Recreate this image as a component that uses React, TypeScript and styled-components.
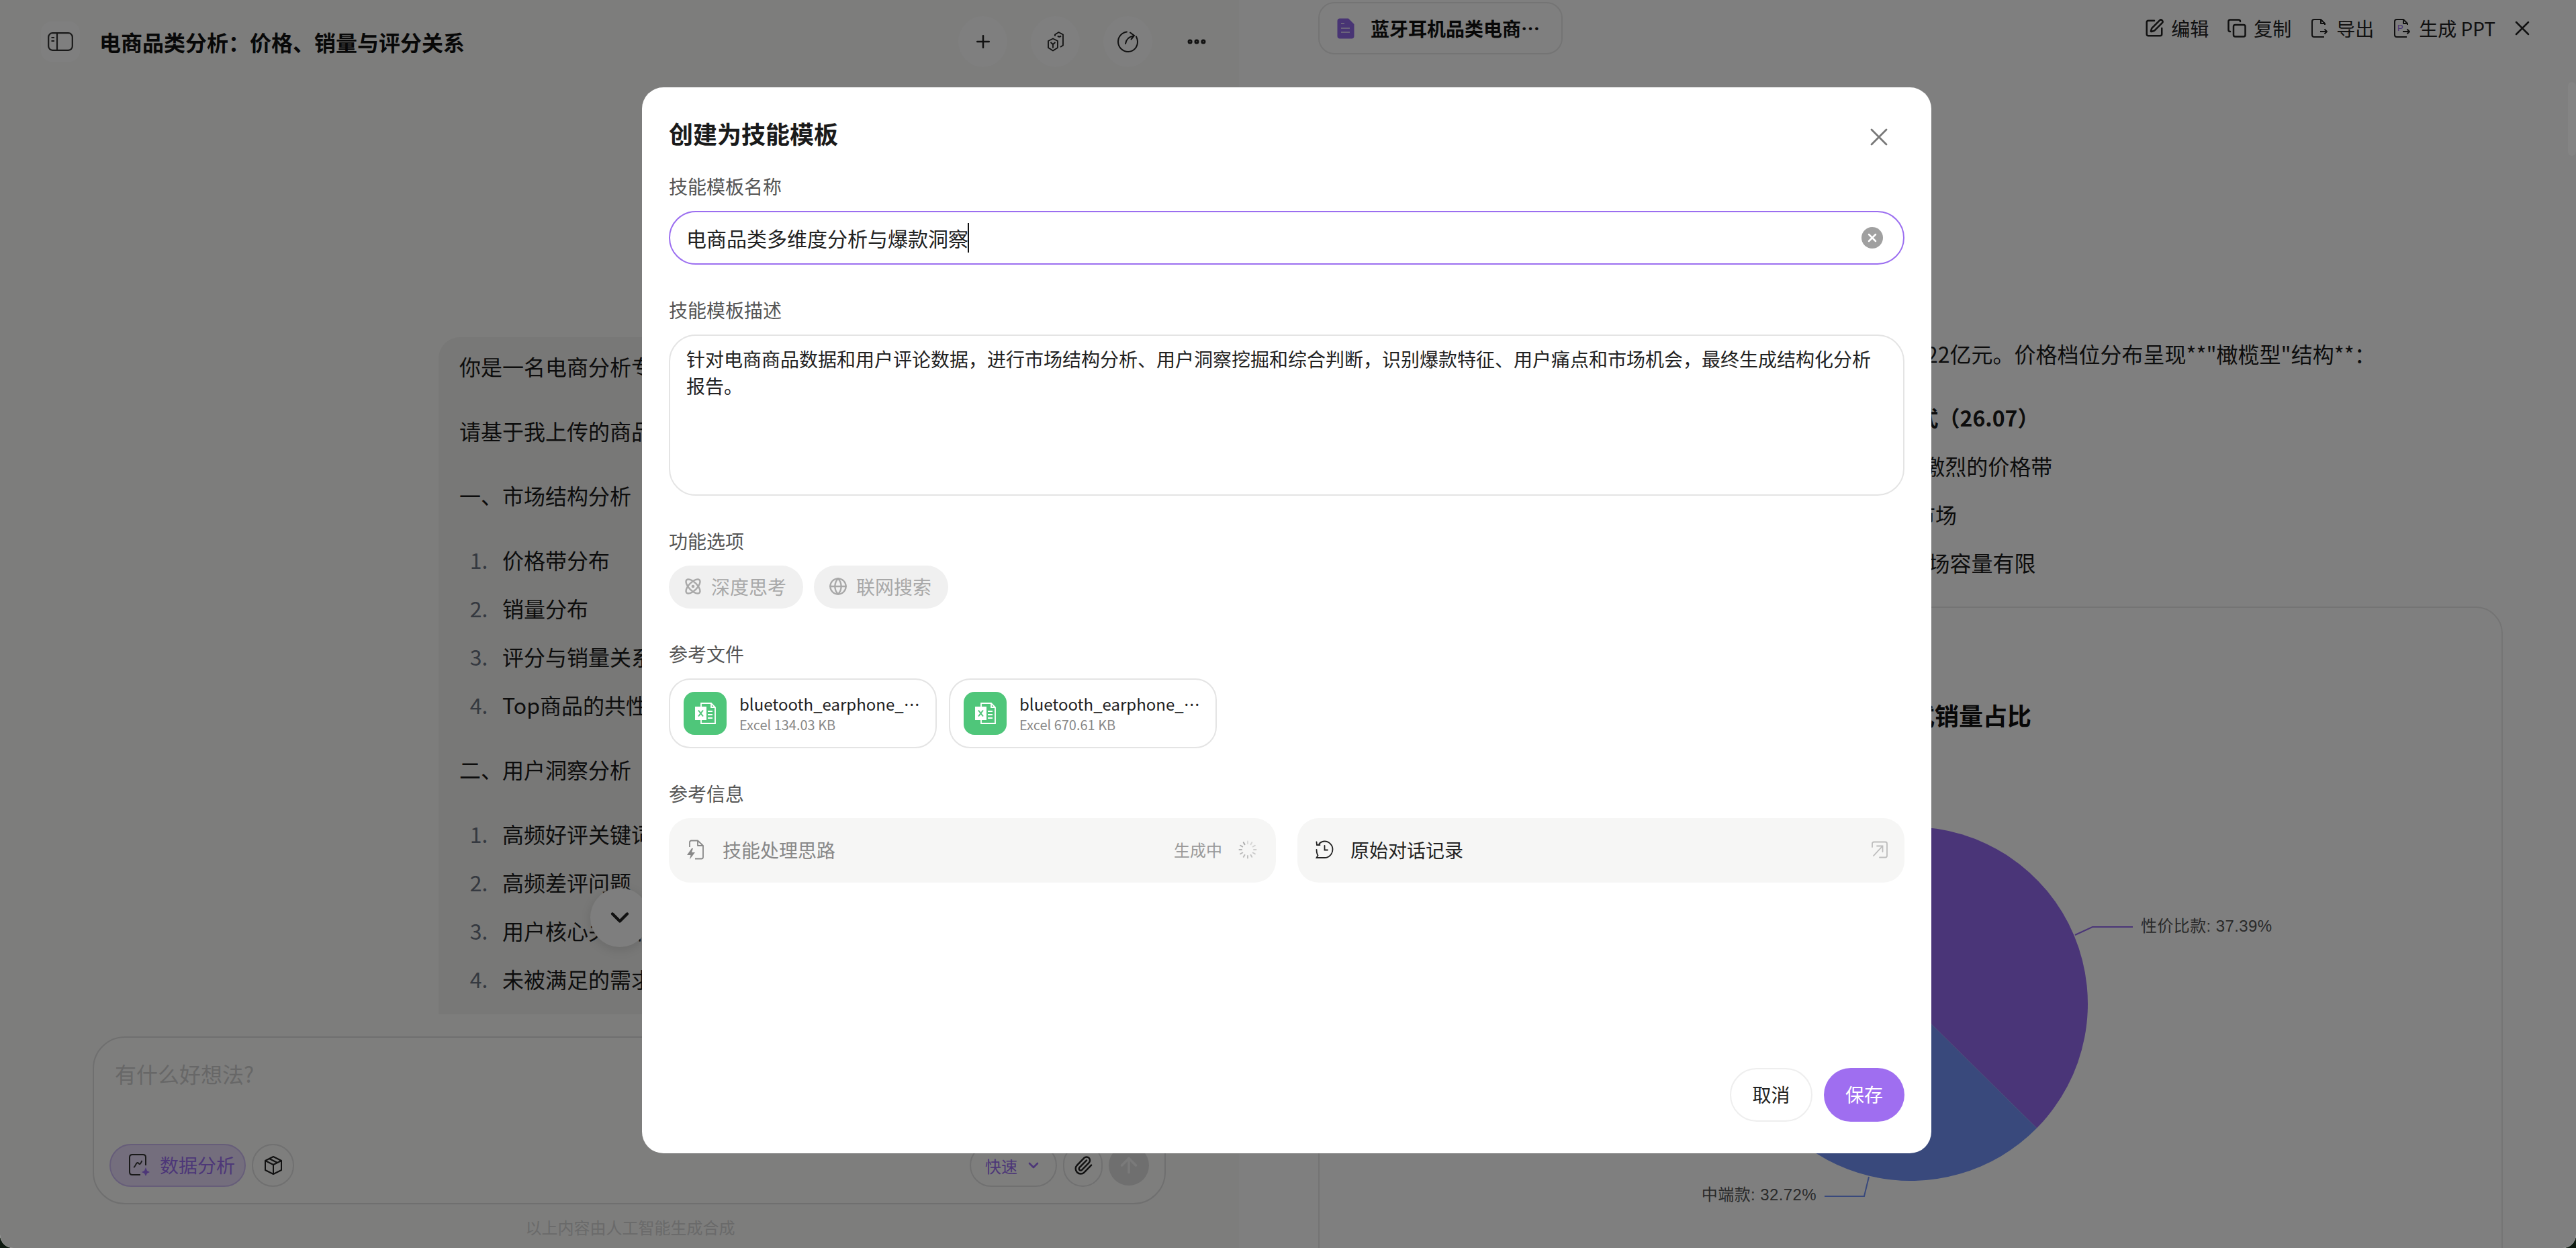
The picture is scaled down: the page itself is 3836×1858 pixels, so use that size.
import React from 'react';
import styled, { createGlobalStyle } from 'styled-components';
import { ArrowUp, Atom, ChevronDown, Copy, Ellipsis, Globe, Paperclip, Plus, SquarePen, X } from 'lucide-react';

const GlobalStyle = createGlobalStyle`
  html, body {
    margin: 0;
    width: 3836px;
    height: 1858px;
    overflow: hidden;
    background: #0e1a10;
  }
  * {
    box-sizing: border-box;
  }
  body {
    font-family: "Noto Sans CJK SC", "Noto Sans", sans-serif;
    color: #222;
  }
`;

const Page = styled.div`
  position: relative;
  display: flex;
  width: 3836px;
  height: 1858px;
  overflow: hidden;
  border-radius: 0 0 20px 20px;
  background: #fff;
`;

/* left: conversation */
const ChatPanel = styled.section`
  position: relative;
  display: flex;
  flex-direction: column;
  width: 1845px;
  flex: none;
  background: #fafaf8;
`;

const ChatHeader = styled.header`
  display: flex;
  align-items: center;
  height: 124px;
  padding: 0 33px 0 61px;
`;

const SidebarButton = styled.button`
  display: flex;
  align-items: center;
  justify-content: center;
  width: 58px;
  height: 60px;
  margin-right: 29px;
  padding: 0;
  border: 0;
  border-radius: 16px;
  background: #fff;
  color: #333;
`;

const ChatTitle = styled.h1`
  flex: 1;
  margin: 0;
  font-size: 32px;
  line-height: 48px;
  font-weight: 700;
  color: #111;
`;

const HeaderTools = styled.div`
  display: flex;
  gap: 35px;
`;

const RoundTool = styled.button<{ $plain?: boolean }>`
  display: flex;
  align-items: center;
  justify-content: center;
  width: ${({ $plain }) => ($plain ? 61 : 73)}px;
  height: 76px;
  padding: 0;
  border: 0;
  border-radius: 50%;
  background: ${({ $plain }) => ($plain ? 'transparent' : '#fefefe')};
  color: #222;
`;

const Messages = styled.div`
  flex: none;
  padding: 378px 109px 0 653px;
`;

const Bubble = styled.div`
  height: 1008px;
  padding: 15px 32px 0 31px;
  border-radius: 32px 0 0 0;
  background: #f0f0ee;
  font-size: 32px;
  line-height: 56px;
  color: #1a1a1a;
  white-space: nowrap;
  overflow: hidden;
`;

const BubbleText = styled.p`
  margin: 0 0 40px;
`;

const BubbleList = styled.ol`
  margin: 0 0 40px;
  padding-left: 64px;

  li {
    margin-bottom: 16px;
  }
  li:last-child {
    margin-bottom: 0;
  }
  li::marker {
    content: counter(list-item) ".   ";
    color: #6b7280;
  }
`;

const ScrollDown = styled.button`
  position: absolute;
  top: 1322px;
  left: 879px;
  display: flex;
  align-items: center;
  justify-content: center;
  width: 88px;
  height: 88px;
  padding: 0;
  border: 0;
  border-radius: 50%;
  background: #fdfdfc;
  box-shadow: 0 4px 16px rgba(0, 0, 0, 0.12);
  color: #222;
`;

const Composer = styled.div`
  display: flex;
  flex-direction: column;
  justify-content: space-between;
  height: 250px;
  margin: 33px 109px 0 138px;
  padding: 29px 23px 24px;
  border: 2px solid #dedede;
  border-radius: 48px;
  background: #fcfcfb;
`;

const Placeholder = styled.div`
  padding-left: 8px;
  font-size: 32px;
  line-height: 48px;
  color: #cfcfcf;
`;

const ComposerRow = styled.div`
  display: flex;
  align-items: center;
  justify-content: space-between;
`;

const ComposerGroup = styled.div`
  display: flex;
  align-items: center;
  gap: 9px;
`;

const ModeChip = styled.div`
  display: flex;
  align-items: center;
  gap: 15px;
  width: 203px;
  height: 64px;
  padding: 0 0 2px 26px;
  border: 2px solid #cdbbf2;
  border-radius: 32px;
  background: #e8dcfb;
  font-size: 28px;
  color: #9a6ef0;
`;

const GhostCircle = styled.div<{ $w: number }>`
  display: flex;
  align-items: center;
  justify-content: center;
  width: ${({ $w }) => $w}px;
  height: 64px;
  border: 2px solid #e0e0e0;
  border-radius: 32px;
  color: #222;
`;

const SpeedChip = styled.div`
  display: flex;
  align-items: center;
  justify-content: center;
  gap: 12px;
  width: 130px;
  height: 64px;
  border: 2px solid #e0e0e0;
  border-radius: 32px;
  font-size: 24px;
  color: #9a6ef0;
`;

const SendCircle = styled.div`
  display: flex;
  align-items: center;
  justify-content: center;
  width: 60px;
  height: 60px;
  border-radius: 50%;
  background: #dedede;
  color: #f4f4f4;
`;

const Disclaimer = styled.div`
  margin: 16px 0 0 32px;
  font-size: 24px;
  line-height: 36px;
  text-align: center;
  color: #d4d4d4;
`;

/* right: document */
const DocPanel = styled.section`
  flex: 1;
  min-width: 0;
  background: #fff;
`;

const DocHeader = styled.header`
  display: flex;
  align-items: center;
  justify-content: space-between;
  height: 84px;
  padding: 3px 62px 3px 118px;
`;

const FileTab = styled.div`
  display: flex;
  align-items: center;
  gap: 24px;
  width: 364px;
  height: 78px;
  padding: 0 24px 0 26px;
  border: 2px solid #e8e8e8;
  border-radius: 24px;
`;

const FileTabName = styled.span`
  width: 256px;
  font-size: 28px;
  font-weight: 700;
  color: #111;
  white-space: nowrap;
  overflow: hidden;
  text-overflow: ellipsis;
`;

const DocActions = styled.div`
  display: flex;
  align-items: center;
  gap: 27px;
`;

const DocAction = styled.div`
  display: flex;
  align-items: center;
  gap: 10px;
  font-size: 28px;
  color: #222;
`;

const DocClose = styled.span`
  display: flex;
  margin-left: -5px;
  color: #222;
`;

const DocBody = styled.div`
  padding: 414px 0 0 118px;
  font-size: 32px;
  line-height: 56px;
  color: #1a1a1a;
  white-space: nowrap;
`;

const DocText = styled.p`
  margin: 0 0 39px;
`;

const DocList = styled.ul`
  margin: 0 0 38px;
  padding-left: 48px;

  li {
    margin-bottom: 16px;
  }
  li:last-child {
    margin-bottom: 0;
  }
`;

const ChartCard = styled.div`
  width: 1764px;
  height: 1100px;
  border: 2px solid #e8e8e8;
  border-radius: 40px;
`;

const ChartSvg = styled.svg`
  display: block;
  font-family: "Liberation Sans", "Noto Sans CJK SC", sans-serif;
`;

/* dialog */
const Overlay = styled.div`
  position: absolute;
  inset: 0;
  display: flex;
  align-items: flex-start;
  padding: 130px 0 0 956px;
  background: rgba(0, 0, 0, 0.5);
`;

const ScrollThumb = styled.div`
  position: absolute;
  top: 122px;
  right: 0;
  width: 12px;
  height: 110px;
  border-radius: 6px;
  background: rgba(255, 255, 255, 0.04);
`;

const Dialog = styled.div`
  display: flex;
  flex-direction: column;
  width: 1920px;
  height: 1587px;
  padding: 45px 40px 47px;
  border-radius: 32px;
  background: #fff;
`;

const DialogHeader = styled.div`
  display: flex;
  align-items: center;
  justify-content: space-between;
  height: 50px;
`;

const DialogTitle = styled.h2`
  margin: 0 0 4px;
  font-size: 36px;
  line-height: 50px;
  font-weight: 700;
  color: #1a1a1a;
`;

const CloseButton = styled.button`
  display: flex;
  margin: 8px 16px 0 0;
  padding: 0;
  border: 0;
  background: none;
  color: #777;
`;

const Field = styled.div<{ $gap?: number }>`
  margin-top: ${({ $gap }) => $gap ?? 49}px;
`;

const FieldLabel = styled.div`
  margin: -2px 0 17px;
  font-size: 28px;
  line-height: 40px;
  color: #555;
`;

const NameInput = styled.div`
  display: flex;
  align-items: center;
  height: 80px;
  padding: 0 30px 0 24px;
  border: 2px solid #9b6ef0;
  border-radius: 40px;
  font-size: 30px;
  color: #222;
`;

const Caret = styled.span`
  width: 2px;
  height: 44px;
  margin-left: -1px;
  background: #111;
`;

const ClearIcon = styled.span`
  display: flex;
  align-items: center;
  justify-content: center;
  width: 32px;
  height: 32px;
  margin-left: auto;
  border-radius: 50%;
  background: #a0a0a0;
  color: #fff;
`;

const DescBox = styled.div`
  height: 240px;
  padding: 14px 30px 18px 24px;
  border: 2px solid #e4e4e4;
  border-radius: 40px;
  font-size: 28px;
  line-height: 40px;
  color: #222;
`;

const ChipRow = styled.div`
  display: flex;
  gap: 16px;
`;

const OptionChip = styled.div`
  display: flex;
  align-items: center;
  gap: 13px;
  width: 200px;
  height: 64px;
  padding: 0 0 3px 22px;
  border-radius: 32px;
  background: #f0f0f0;
  font-size: 28px;
  color: #a8a8a8;
`;

const FileRow = styled.div`
  display: flex;
  gap: 18px;
`;

const FileCard = styled.div`
  display: flex;
  align-items: center;
  gap: 19px;
  width: 399px;
  height: 104px;
  padding: 0 16px 0 20px;
  border: 2px solid #e4e4e4;
  border-radius: 32px;
`;

const FileBadge = styled.div`
  display: flex;
  flex: none;
  width: 64px;
  height: 64px;
  border-radius: 16px;
  background: #4fc67a;
`;

const FileInfo = styled.div`
  flex: 1;
  min-width: 0;
`;

const FileName = styled.div`
  font-size: 24px;
  line-height: 34px;
  color: #222;
  white-space: nowrap;
  overflow: hidden;
  text-overflow: ellipsis;
`;

const FileMeta = styled.div`
  font-size: 20px;
  line-height: 28px;
  color: #888;
`;

const RefRow = styled.div`
  display: grid;
  grid-template-columns: 1fr 1fr;
  gap: 32px;
`;

const RefCard = styled.div<{ $muted?: boolean }>`
  display: flex;
  align-items: center;
  gap: 25px;
  height: 96px;
  padding: 0 26px 3px;
  border-radius: 32px;
  background: #f6f6f5;
  font-size: 28px;
  color: ${({ $muted }) => ($muted ? '#888' : '#222')};
`;

const RefStatus = styled.div`
  display: flex;
  align-items: center;
  gap: 24px;
  margin: 0 2px 0 auto;
  font-size: 24px;
  color: #999;
`;

const RefOpen = styled.span`
  display: flex;
  margin: 0 -2px 0 auto;
  color: #bdbdbd;
`;

const DialogFooter = styled.div`
  display: flex;
  justify-content: flex-end;
  gap: 17px;
  margin-top: auto;
`;

const FooterButton = styled.button<{ $primary?: boolean }>`
  width: ${({ $primary }) => ($primary ? 120 : 123)}px;
  height: 80px;
  padding: 0 0 3px;
  border: ${({ $primary }) => ($primary ? '0' : '2px solid #eeeeee')};
  border-radius: 40px;
  background: ${({ $primary }) => ($primary ? '#9f6ef0' : '#fff')};
  font-family: inherit;
  font-size: 28px;
  color: ${({ $primary }) => ($primary ? '#fff' : '#222')};
`;

const SidebarIcon = () => (
  <svg width="38" height="28" viewBox="0 0 38 28" fill="none" stroke="currentColor" strokeWidth="2.2">
    <rect x="1.2" y="1.2" width="35.6" height="25.6" rx="6" />
    <path d="M14 1.5V26.5M5.5 8H10M5.5 13H10" />
  </svg>
);

const CubesIcon = () => (
  <svg width="32" height="32" viewBox="0 0 32 32" fill="none" stroke="currentColor" strokeWidth="1.8" strokeLinejoin="round">
    <path d="M15 8V5.5L20.5 2L27 5.5V21.5L23 24" />
    <path d="M19 7.5C20.5 9 22.5 9 24 7.5" />
    <path d="M5 15L12 11.5L19 15V25L12 29.5L5 25V15Z" />
    <path d="M8.5 17L12 20L15.5 17M12 20V25.5" />
  </svg>
);

const ShareRingIcon = () => (
  <svg width="34" height="34" viewBox="0 0 34 34" fill="none" stroke="currentColor" strokeWidth="2" strokeLinecap="round">
    <path d="M15 2.5C7.5 3.5 2 9.5 2 17C2 25 8.5 32 17 32C25 32 31 25.5 31 17C31 14 30 11.5 29 9.5" />
    <path d="M13 20C14 14 18.5 9.5 25 8.5M20 3.5L26 8L21.5 13.5" />
  </svg>
);

const DocGlyph = () => (
  <svg width="26" height="31" viewBox="0 0 26 31" fill="none">
    <path d="M4 0.5H17L25.5 9V27C25.5 29 24 30.5 22 30.5H4C2 30.5 0.5 29 0.5 27V4C0.5 2 2 0.5 4 0.5Z" fill="#9068e8" />
    <path d="M6 8H11M6 15H19M6 21H19" stroke="#d6c8f6" strokeWidth="2" />
  </svg>
);

const ExportIcon = ({ mark }: { mark?: boolean }) => (
  <svg width="30" height="30" viewBox="0 0 30 30" fill="none" stroke="currentColor" strokeWidth="2" strokeLinejoin="round">
    <path d="M23 10V8L17 2H7C5 2 4 3 4 5V25C4 27 5 28 7 28H22" />
    <path d="M17 2V8H23" />
    <path d="M16 20H26M22.5 16.5L26 20L22.5 23.5" />
    {mark && (
      <text x="8" y="19" fontSize="13" fontFamily="Liberation Sans, sans-serif" fill="#9068e8" stroke="none">
        P
      </text>
    )}
  </svg>
);

const FileSheetIcon = () => (
  <svg width="64" height="64" viewBox="0 0 64 64" fill="none">
    <path d="M26 17H41L47 23V47H26V17Z" stroke="#fff" strokeWidth="1.8" />
    <path d="M41 17V23H47M36 29H43M36 34H43M36 39H43" stroke="#fff" strokeWidth="1.8" />
    <rect x="17" y="22" width="17" height="20" fill="#fff" />
    <path d="M22 27.5L29 36.5M29 27.5L22 36.5" stroke="#4fc67a" strokeWidth="2" />
  </svg>
);

const BoltFileIcon = () => (
  <svg width="29" height="30" viewBox="0 0 29 30" fill="none" stroke="currentColor" strokeWidth="1.8" strokeLinejoin="round">
    <path d="M5 11V4C5 2.5 6 1.5 7.5 1.5H17L25 9V26C25 27.5 24 28.5 22.5 28.5H13" />
    <path d="M17 1.5V9H25" />
    <path d="M8 13L1 23H6.5L5 29.5L13 19H8L10 13H8Z" fill="currentColor" stroke="none" />
  </svg>
);

const HistoryChatIcon = () => (
  <svg width="28" height="28" viewBox="0 0 28 28" fill="none" stroke="currentColor" strokeWidth="1.8" strokeLinecap="round">
    <path d="M6.5 5C9 2.5 11.5 1.5 14.5 1.5C21 1.5 26.5 7 26.5 13.5C26.5 20.5 21 26 14.5 26H2.5L4.5 22.5C3 20 2.5 17 2.5 14" />
    <path d="M2.5 2.5L3 7H7.5" />
    <path d="M14.5 8V14.5H19" />
  </svg>
);

const OpenSquareIcon = () => (
  <svg width="26" height="26" viewBox="0 0 26 26" fill="none" stroke="currentColor" strokeWidth="1.8" strokeLinecap="round">
    <path d="M2 9V4C2 2.5 3 1.5 4.5 1.5H21.5C23 1.5 24 2.5 24 4V22C24 23.5 23 24.5 21.5 24.5H13" />
    <path d="M4 22L17 8M9 7.5H17.5V16" />
  </svg>
);

const Spinner = () => (
  <svg width="28" height="28" viewBox="0 0 28 28" stroke="#a8a8a8" strokeWidth="2" strokeLinecap="round">
    {Array.from({ length: 12 }).map((_, i) => (
      <line key={i} x1="14" y1="1.5" x2="14" y2="5" transform={`rotate(${i * 30} 14 14)`} opacity={0.35 + i * 0.055} />
    ))}
  </svg>
);

const TrendSparkIcon = () => (
  <svg width="32" height="34" viewBox="0 0 32 34" fill="none">
    <path
      d="M26 18V6C26 3.5 24.5 2 22 2H6C3.5 2 2 3.5 2 6V28C2 30.5 3.5 32 6 32H18"
      stroke="#333"
      strokeWidth="2"
    />
    <path d="M8 21C11 20 11 14 14 14C16 14 15.5 17 17.5 16C19 15 19.5 12.5 20.5 11" stroke="#333" strokeWidth="1.8" />
    <path d="M26 21L28 26L32 28L28 30L26 34L24 30L20 28L24 26L26 21Z" fill="#9a6ef0" />
  </svg>
);

const BoxIcon = () => (
  <svg width="30" height="30" viewBox="0 0 30 30" fill="none" stroke="currentColor" strokeWidth="2" strokeLinejoin="round">
    <path d="M15 2L27 8V22L15 28L3 22V8L15 2Z" />
    <path d="M3 8L15 14L27 8M15 14V28M9 5L21 11" />
  </svg>
);

// pie from a data list, slices run clockwise from 12 o'clock
const PIE_CX = 880.5;
const PIE_CY = 589.5;
const PIE_R = 263.5;
const slices = [
  { share: 37.39, color: '#946af0' },
  { share: 32.72, color: '#7292f8' },
  { share: 29.89, color: '#8fd0f0' },
];

const piePaths = () => {
  let from = 0;
  return slices.map((s) => {
    const to = from + (s.share / 100) * Math.PI * 2;
    const sx = PIE_CX + PIE_R * Math.sin(from);
    const sy = PIE_CY - PIE_R * Math.cos(from);
    const ex = PIE_CX + PIE_R * Math.sin(to);
    const ey = PIE_CY - PIE_R * Math.cos(to);
    from = to;
    return { d: `M${PIE_CX} ${PIE_CY}L${sx} ${sy}A${PIE_R} ${PIE_R} 0 0 1 ${ex} ${ey}Z`, color: s.color };
  });
};

const PriceChart = () => (
  <ChartSvg width="1760" height="1096" viewBox="0 0 1760 1096">
    <text x="880" y="165" textAnchor="middle" dominantBaseline="middle" fontSize="36" fontWeight="700" fill="#111">
      不同档位款式销量占比
    </text>
    {piePaths().map((p) => (
      <path key={p.color} d={p.d} fill={p.color} />
    ))}
    <path d="M1125 487L1151 475H1211" fill="none" stroke="#946af0" strokeWidth="2" />
    <text x="1223" y="476" dominantBaseline="middle" fontSize="24" letterSpacing="0.4" fill="#555">
      性价比款: 37.39%
    </text>
    <path d="M818 847L811 876H752" fill="none" stroke="#7292f8" strokeWidth="2" />
    <text x="740" y="876" textAnchor="end" dominantBaseline="middle" fontSize="24" letterSpacing="0.4" fill="#555">
      中端款: 32.72%
    </text>
  </ChartSvg>
);

export default function App() {
  return (
    <>
      <GlobalStyle />
      <Page>
        <ChatPanel>
          <ChatHeader>
            <SidebarButton>
              <SidebarIcon />
            </SidebarButton>
            <ChatTitle>电商品类分析：价格、销量与评分关系</ChatTitle>
            <HeaderTools>
              <RoundTool>
                <Plus size={30} strokeWidth={2} />
              </RoundTool>
              <RoundTool>
                <CubesIcon />
              </RoundTool>
              <RoundTool>
                <ShareRingIcon />
              </RoundTool>
              <RoundTool $plain>
                <Ellipsis size={34} strokeWidth={3} />
              </RoundTool>
            </HeaderTools>
          </ChatHeader>
          <Messages>
            <Bubble>
              <BubbleText>你是一名电商分析专家。</BubbleText>
              <BubbleText>请基于我上传的商品数据和评论数据进行分析：</BubbleText>
              <BubbleText>一、市场结构分析</BubbleText>
              <BubbleList>
                <li>价格带分布</li>
                <li>销量分布</li>
                <li>评分与销量关系</li>
                <li>Top商品的共性特征</li>
              </BubbleList>
              <BubbleText>二、用户洞察分析</BubbleText>
              <BubbleList>
                <li>高频好评关键词</li>
                <li>高频差评问题</li>
                <li>用户核心关注点</li>
                <li>未被满足的需求</li>
              </BubbleList>
            </Bubble>
          </Messages>
          <ScrollDown>
            <ChevronDown size={44} strokeWidth={2.4} />
          </ScrollDown>
          <Composer>
            <Placeholder>有什么好想法?</Placeholder>
            <ComposerRow>
              <ComposerGroup>
                <ModeChip>
                  <TrendSparkIcon />
                  数据分析
                </ModeChip>
                <GhostCircle $w={63}>
                  <BoxIcon />
                </GhostCircle>
              </ComposerGroup>
              <ComposerGroup>
                <SpeedChip>
                  快速
                  <ChevronDown size={24} strokeWidth={2.6} />
                </SpeedChip>
                <GhostCircle $w={59}>
                  <Paperclip size={30} strokeWidth={2} />
                </GhostCircle>
                <SendCircle>
                  <ArrowUp size={36} strokeWidth={2.4} />
                </SendCircle>
              </ComposerGroup>
            </ComposerRow>
          </Composer>
          <Disclaimer>以上内容由人工智能生成合成</Disclaimer>
        </ChatPanel>

        <DocPanel>
          <DocHeader>
            <FileTab>
              <DocGlyph />
              <FileTabName>蓝牙耳机品类电商分析报告</FileTabName>
            </FileTab>
            <DocActions>
              <DocAction>
                <SquarePen size={30} strokeWidth={2} />
                编辑
              </DocAction>
              <DocAction>
                <Copy size={30} strokeWidth={2} />
                复制
              </DocAction>
              <DocAction>
                <ExportIcon />
                导出
              </DocAction>
              <DocAction>
                <ExportIcon mark />
                生成 PPT
              </DocAction>
              <DocClose>
                <X size={36} strokeWidth={1.7} />
              </DocClose>
            </DocActions>
          </DocHeader>
          <DocBody>
            <DocText>
              本次分析共覆盖蓝牙耳机商品约两千款，全品类累计销售额约&nbsp; 3.22亿元。价格档位分布呈现**"橄榄型"结构**：
            </DocText>
            <DocList>
              <li>
                <strong>价格中枢约在2000元，大多数商品集中于中端档位的主流形式（26.07）</strong>
              </li>
              <li>主力价格带在100元上下，商品数量最多，也是全市场竞争最激烈的价格带</li>
              <li>高端款价格超过1000元，商品数量少，主要服务于高价细分市场</li>
              <li>超低价款不足100 元，商品销量有限，反映出这一价位段的市场容量有限</li>
            </DocList>
            <ChartCard>
              <PriceChart />
            </ChartCard>
          </DocBody>
        </DocPanel>

        <Overlay>
          <ScrollThumb />
          <Dialog>
            <DialogHeader>
              <DialogTitle>创建为技能模板</DialogTitle>
              <CloseButton>
                <X size={44} strokeWidth={1.5} />
              </CloseButton>
            </DialogHeader>
            <Field $gap={34}>
              <FieldLabel>技能模板名称</FieldLabel>
              <NameInput>
                电商品类多维度分析与爆款洞察
                <Caret />
                <ClearIcon>
                  <X size={20} strokeWidth={3} />
                </ClearIcon>
              </NameInput>
            </Field>
            <Field>
              <FieldLabel>技能模板描述</FieldLabel>
              <DescBox>
                针对电商商品数据和用户评论数据，进行市场结构分析、用户洞察挖掘和综合判断，识别爆款特征、用户痛点和市场机会，最终生成结构化分析报告。
              </DescBox>
            </Field>
            <Field>
              <FieldLabel>功能选项</FieldLabel>
              <ChipRow>
                <OptionChip>
                  <Atom size={28} strokeWidth={2} />
                  深度思考
                </OptionChip>
                <OptionChip>
                  <Globe size={28} strokeWidth={2} />
                  联网搜索
                </OptionChip>
              </ChipRow>
            </Field>
            <Field>
              <FieldLabel>参考文件</FieldLabel>
              <FileRow>
                <FileCard>
                  <FileBadge>
                    <FileSheetIcon />
                  </FileBadge>
                  <FileInfo>
                    <FileName>bluetooth_earphone_products.xlsx</FileName>
                    <FileMeta>Excel 134.03 KB</FileMeta>
                  </FileInfo>
                </FileCard>
                <FileCard>
                  <FileBadge>
                    <FileSheetIcon />
                  </FileBadge>
                  <FileInfo>
                    <FileName>bluetooth_earphone_reviews.xlsx</FileName>
                    <FileMeta>Excel 670.61 KB</FileMeta>
                  </FileInfo>
                </FileCard>
              </FileRow>
            </Field>
            <Field>
              <FieldLabel>参考信息</FieldLabel>
              <RefRow>
                <RefCard $muted>
                  <BoltFileIcon />
                  技能处理思路
                  <RefStatus>
                    生成中
                    <Spinner />
                  </RefStatus>
                </RefCard>
                <RefCard>
                  <HistoryChatIcon />
                  原始对话记录
                  <RefOpen>
                    <OpenSquareIcon />
                  </RefOpen>
                </RefCard>
              </RefRow>
            </Field>
            <DialogFooter>
              <FooterButton>取消</FooterButton>
              <FooterButton $primary>保存</FooterButton>
            </DialogFooter>
          </Dialog>
        </Overlay>
      </Page>
    </>
  );
}
